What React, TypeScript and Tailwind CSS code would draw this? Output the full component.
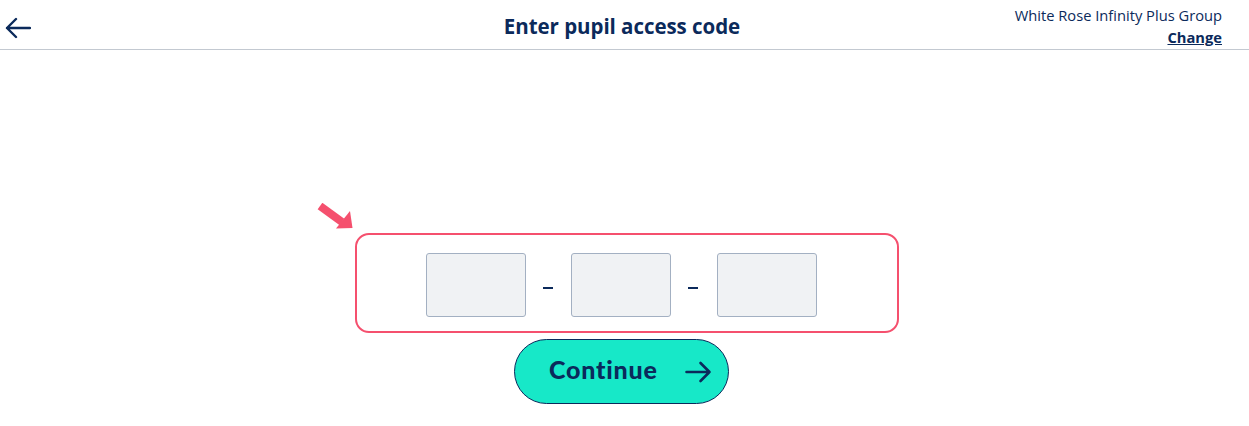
import React from 'react';

const navy = 'text-[#0b2a5b]';

function ArrowLeft() {
  return (
    <svg width="26" height="22" viewBox="0 0 26 22" fill="none">
      <path d="M25 11H2M11 2L2 11L11 20" stroke="#0b2a5b" strokeWidth="2.4" strokeLinecap="round" strokeLinejoin="round" />
    </svg>
  );
}

function ArrowRight() {
  return (
    <svg width="27" height="22" viewBox="0 0 27 22" fill="none">
      <path d="M1.5 11H24.5M15.5 2L24.5 11L15.5 20" stroke="#0b2a5b" strokeWidth="2.6" strokeLinecap="round" strokeLinejoin="round" />
    </svg>
  );
}

function PointerArrow() {
  return (
    <svg width="40" height="30" viewBox="0 0 40 30" fill="none">
      <path d="M3 3L25 19" stroke="#f5506e" strokeWidth="8" />
      <path d="M33 8L35.5 25L19 25.5Z" fill="#f5506e" />
    </svg>
  );
}

export default function App() {
  return (
    <div className="min-h-screen bg-white font-['Open_Sans',sans-serif]">
      {/* header */}
      <header className="h-[50px] border-b border-[#c3c9d1] flex items-center justify-between pl-[5px] pr-[27px]">
        <div className="w-[237px] flex items-center pt-[7px]">
          <ArrowLeft />
        </div>
        <h1 className={`text-[20.5px] font-bold ${navy} tracking-[-0.05px] pt-[4px]`}>
          Enter pupil access code
        </h1>
        <div className={`w-[220px] flex flex-col items-end ${navy} text-[14.7px] leading-[22px] pt-[2px]`}>
          <span>White Rose Infinity Plus Group</span>
          <a href="#" className="font-bold underline">Change</a>
        </div>
      </header>

      {/* code entry */}
      <main className="flex flex-col items-center pt-[183px]">
        <div className="relative ml-[4px] w-[544px] h-[100px] border-2 border-[#f5506e] rounded-[14px] flex items-start pl-[69px] pt-[18px]">
          <div className="absolute left-[-40px] top-[-32px]">
            <PointerArrow />
          </div>
          <div className="w-[100px] h-[64px] bg-[#f0f2f4] border border-[#a3b0c2] rounded-[3px]" />
          <div className="w-[10px] h-[2px] bg-[#0b2a5b] ml-[17px] mr-[18px] mt-[34px]" />
          <div className="w-[100px] h-[64px] bg-[#f0f2f4] border border-[#a3b0c2] rounded-[3px]" />
          <div className="w-[10px] h-[2px] bg-[#0b2a5b] ml-[17px] mr-[19px] mt-[34px]" />
          <div className="w-[100px] h-[64px] bg-[#f0f2f4] border border-[#a3b0c2] rounded-[3px]" />
        </div>

        <button className={`mt-[6px] mr-[6px] w-[215px] h-[65px] rounded-full bg-[#17e8c8] border border-[#0b2a5b] flex items-center pl-[34px] ${navy}`}>
          <span className="text-[25px] font-black font-['Lato',sans-serif] tracking-[0.8px] leading-none pb-[4px]">Continue</span>
          <span className="ml-[27px]"><ArrowRight /></span>
        </button>
      </main>
    </div>
  );
}
